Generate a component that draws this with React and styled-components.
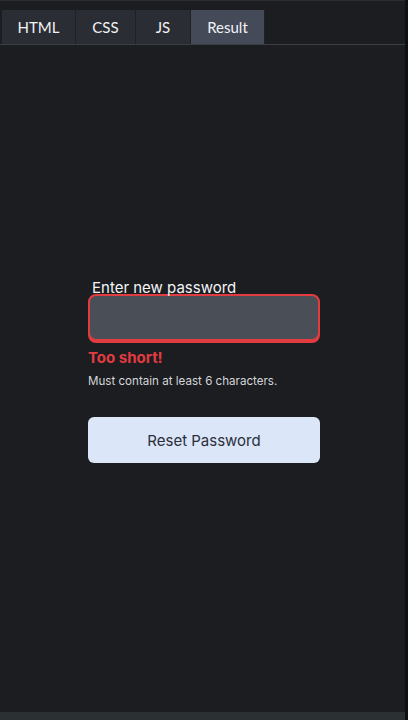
import React from 'react';
import styled, { createGlobalStyle } from 'styled-components';

const GlobalStyle = createGlobalStyle`
  html, body {
    margin: 0;
    padding: 0;
    background: #1b1d20;
  }
  * {
    box-sizing: border-box;
  }
`;

const Screen = styled.div`
  width: 408px;
  height: 720px;
  display: flex;
  flex-direction: column;
  background: #1b1d20;
  border-right: 3px solid #0f1012;
  overflow: hidden;
`;

const TopStrip = styled.div`
  height: 10px;
  border-top: 1px solid #2a2d31;
`;

const TabBar = styled.div`
  display: flex;
  padding-left: 2px;
  height: 35px;
  border-bottom: 1px solid #3b4046;
`;

const Tab = styled.div`
  width: ${(p) => p.w}px;
  display: flex;
  align-items: center;
  justify-content: center;
  background: ${(p) => (p.active ? '#444a57' : '#2a2e34')};
  border-right: 1px solid #1e2125;
  color: #f2f3f5;
  font-family: Lato, 'Liberation Sans', sans-serif;
  font-size: 15px;
  padding-bottom: 1px;
`;

const Content = styled.div`
  flex: 1;
  display: flex;
  flex-direction: column;
  align-items: center;
  padding-top: 235px;
  padding-left: 3px;
`;

const Form = styled.div`
  width: 232px;
  display: flex;
  flex-direction: column;
  font-family: Inter, 'Noto Sans', sans-serif;
`;

const Label = styled.label`
  color: #f4f5f7;
  font-size: 15px;
  line-height: 16px;
  padding-left: 4px;
  margin-bottom: -2px;
  position: relative;
  z-index: 1;
`;

const Input = styled.input`
  height: 47px;
  border-radius: 8px;
  background: #4a4f57;
  border: 2px solid #e23b40;
  box-shadow: 0 2px 0 #e23b40;
  outline: none;
  padding: 0 10px;
  color: #fff;
  font-size: 15px;
`;

const ErrorTitle = styled.div`
  margin-top: 8px;
  color: #e23b40;
  font-size: 15px;
  font-weight: 700;
  line-height: 18px;
`;

const Hint = styled.div`
  margin-top: 7px;
  color: #d4d5d8;
  font-size: 11.6px;
  line-height: 14px;
`;

const Button = styled.button`
  margin-top: 29px;
  height: 46px;
  border: none;
  border-radius: 6px;
  background: #dbe6f8;
  color: #2a2f3a;
  font-family: Inter, 'Noto Sans', sans-serif;
  font-size: 15px;
  cursor: pointer;
`;

const BottomStrip = styled.div`
  height: 8px;
  background: #2b3133;
`;

const tabs = [
  { label: 'HTML', w: 74 },
  { label: 'CSS', w: 60 },
  { label: 'JS', w: 55 },
  { label: 'Result', w: 74, active: true },
];

export default function App() {
  return (
    <>
      <GlobalStyle />
      <Screen>
        <TopStrip />
        <TabBar>
          {tabs.map((t) => (
            <Tab key={t.label} w={t.w} active={t.active}>
              {t.label}
            </Tab>
          ))}
        </TabBar>
        <Content>
          <Form>
            <Label htmlFor="pw">Enter new password</Label>
            <Input id="pw" type="password" />
            <ErrorTitle>Too short!</ErrorTitle>
            <Hint>Must contain at least 6 characters.</Hint>
            <Button>Reset Password</Button>
          </Form>
        </Content>
        <BottomStrip />
      </Screen>
    </>
  );
}
